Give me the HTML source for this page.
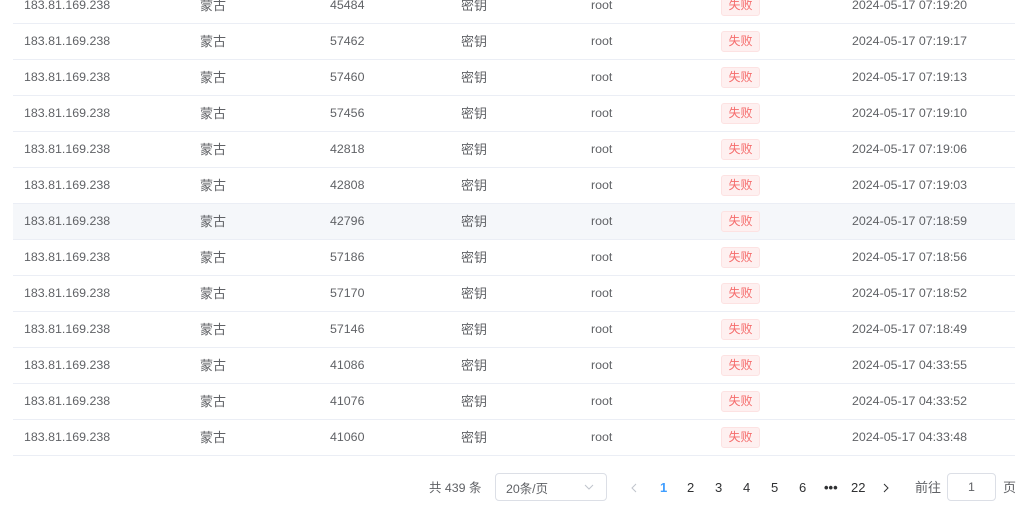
<!DOCTYPE html>
<html><head><meta charset="utf-8"><style>
body{margin:0;width:1024px;height:518px;overflow:hidden;background:#fff;font-family:"Liberation Sans","Noto Sans CJK SC",sans-serif;font-size:12.4px;color:#606266;position:relative}
.row{position:absolute;left:13px;width:1002px;height:35px;border-bottom:1px solid #ebeef5}
.row.h{background:#f5f7fa}
.row span{position:absolute;top:0;line-height:35px}
.row span.c{font-size:13px}
.tag{position:absolute;left:708px;top:7px;width:39px;height:21px;box-sizing:border-box;border:1px solid #fde2e2;background:#fef0f0;color:#f56c6c;font-size:12px;line-height:19px;text-align:center;border-radius:3px}
.pg{position:absolute;top:480px;line-height:16px;font-size:13px;color:#303133}
</style></head><body>
<div id="t"></div>
<script>
var d=[["45484","07:19:20"],["57462","07:19:17"],["57460","07:19:13"],["57456","07:19:10"],["42818","07:19:06"],["42808","07:19:03"],["42796","07:18:59"],["57186","07:18:56"],["57170","07:18:52"],["57146","07:18:49"],["41086","04:33:55"],["41076","04:33:52"],["41060","04:33:48"]];
var h="";d.forEach(function(r,i){var top=-12+36*i;h+='<div class="row'+(i==6?' h':'')+'" style="top:'+top+'px"><span style="left:11px">183.81.169.238</span><span class="c" style="left:187px">蒙古</span><span style="left:317px">'+r[0]+'</span><span class="c" style="left:448px">密钥</span><span style="left:578px">root</span><div class="tag">失败</div><span style="left:839px">2024-05-17 '+r[1]+'</span></div>';});
document.getElementById("t").innerHTML=h;
</script>
<span class="pg" style="left:429px;color:#606266;font-size:12.4px">共 439 条</span>
<div style="position:absolute;left:495px;top:473px;width:112px;height:28px;box-sizing:border-box;border:1px solid #dcdfe6;border-radius:4px"><span style="position:absolute;left:10px;top:5px;color:#606266;font-size:12.4px">20条/页</span><svg style="position:absolute;right:12px;top:10px" width="10" height="7"><path d="M1 1L5 5L9 1" stroke="#c0c4cc" fill="none"/></svg></div>
<svg style="position:absolute;left:631px;top:483px" width="7" height="10"><path d="M5 1L1 5L5 9" stroke="#c0c4cc" fill="none"/></svg>
<span class="pg" style="left:660px;color:#409eff;font-weight:bold">1</span>
<span class="pg" style="left:687px">2</span>
<span class="pg" style="left:715px">3</span>
<span class="pg" style="left:743px">4</span>
<span class="pg" style="left:771px">5</span>
<span class="pg" style="left:799px">6</span>
<span class="pg" style="left:824px;font-weight:bold">•••</span>
<span class="pg" style="left:851px">22</span>
<svg style="position:absolute;left:883px;top:483px" width="7" height="10"><path d="M1 1L5 5L1 9" stroke="#303133" fill="none"/></svg>
<span class="pg" style="left:915px;color:#606266">前往</span>
<div style="position:absolute;left:947px;top:473px;width:49px;height:28px;box-sizing:border-box;border:1px solid #dcdfe6;border-radius:4px;text-align:center;line-height:26px;color:#606266">1</div>
<span class="pg" style="left:1003px;color:#606266">页</span>
</body></html>
